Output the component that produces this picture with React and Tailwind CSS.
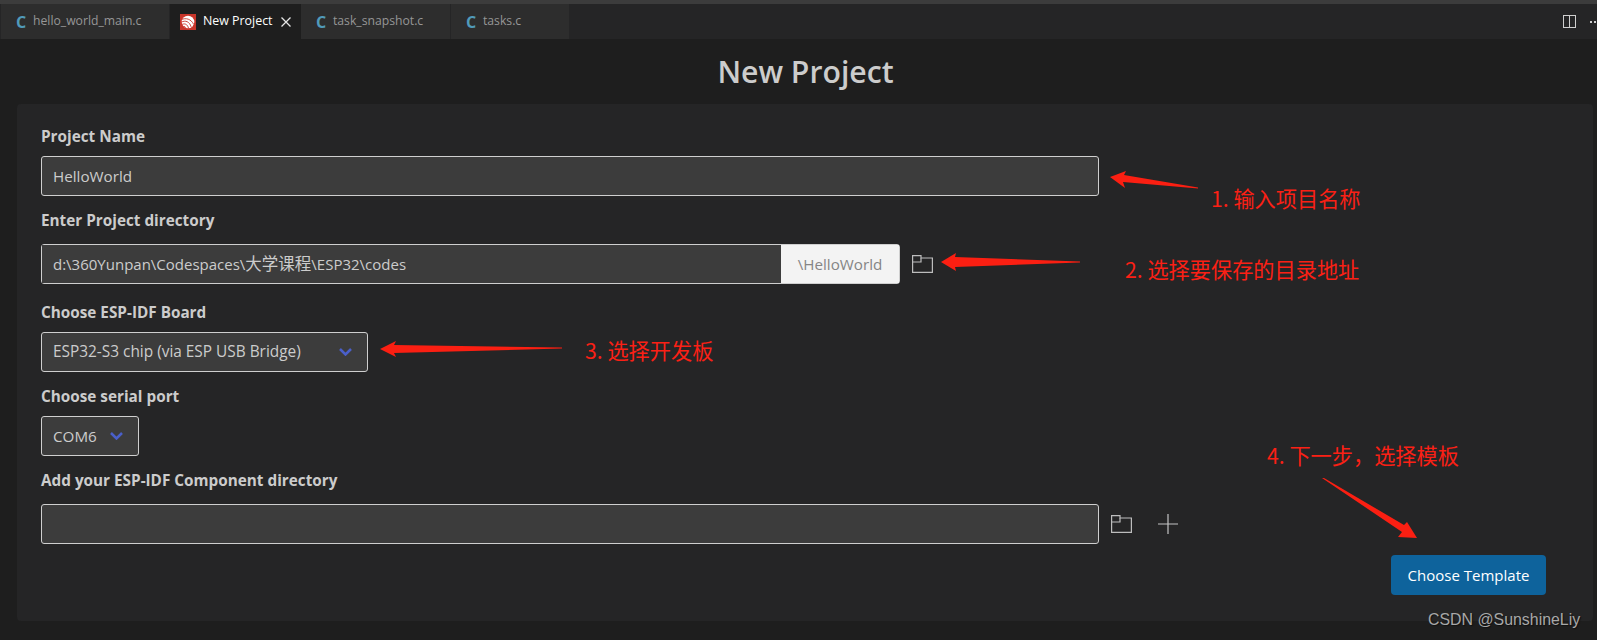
const FONT = "font-['Open_Sans','Noto_Sans_CJK_SC',sans-serif]";

function CIcon() {
  return <span className="w-[12px] text-[16px] font-bold leading-none text-[#519aba]">C</span>;
}

function Tab({ name, width }) {
  return (
    <div className={`flex h-full items-center gap-[5px] border-r border-[#252526] bg-[#2d2d2d] pl-[15px] ${width}`}>
      <CIcon />
      <span className="text-[12.2px] text-[#969696]">{name}</span>
    </div>
  );
}

function EspIcon() {
  return (
    <svg width="16" height="16" viewBox="0 0 16 16" className="shrink-0">
      <rect width="16" height="16" fill="#c8352a" />
      <circle cx="8" cy="8" r="6.3" fill="#fff" />
      <g fill="none" stroke="#c8352a" strokeWidth="0.9" strokeLinecap="round">
        <path d="M1.5 5.5 C6 3.5 11 5 13.5 10" />
        <path d="M1.5 8 C5.5 6 9.5 7.5 11 12.5" />
        <path d="M2 10.5 C4.5 9 7.5 10 8.5 14" />
        <path d="M3.5 12.5 C4.5 12 5.5 12.8 5.8 14" />
      </g>
    </svg>
  );
}

function FolderIcon({ className }) {
  return (
    <svg viewBox="0 0 21 18" fill="none" stroke="#bdbdbd" strokeWidth="1.2" className={className}>
      <path d="M.6 17.4V.6H9V3H20.4V17.4Z" />
      <path d="M.6 7H9V3" />
    </svg>
  );
}

function Chevron() {
  return (
    <svg width="13" height="8" viewBox="0 0 13 8" fill="none" stroke="#4a5fc9" strokeWidth="2.5" className="shrink-0">
      <path d="M1 1L6.5 6.5L12 1" />
    </svg>
  );
}

function Annotation({ className, children }) {
  return (
    <div className={`absolute whitespace-nowrap text-[21.2px] font-normal leading-none text-[#fb2015] font-['Noto_Sans_CJK_SC',sans-serif] ${className}`}>
      {children}
    </div>
  );
}

const labelClass = "h-[22px] text-[15.3px] font-bold leading-[22px] text-[#cccccc]";
const boxClass = "h-[40px] rounded-[3px] border border-[#cfcfcf] bg-[#3c3c3c] text-[15.2px] text-[#cccccc]";

export default function App() {
  return (
    <div className={`relative h-[640px] w-[1597px] overflow-hidden bg-[#1e1e1e] ${FONT}`}>
      <div className="h-[4px] bg-[#3c3c3c]" />

      <div className="flex h-[35px] bg-[#252526] pl-[1px]">
        <Tab name="hello_world_main.c" width="w-[169px]" />
        <div className="flex h-full w-[131px] items-center bg-[#1e1e1e] pl-[10px]">
          <EspIcon />
          <span className="ml-[7px] text-[12.4px] text-white">New Project</span>
          <svg width="10" height="10" viewBox="0 0 10 10" stroke="#e6e6e6" strokeWidth="1.3" className="ml-[8px]">
            <path d="M.5 .5L9.5 9.5M9.5 .5L.5 9.5" />
          </svg>
        </div>
        <Tab name="task_snapshot.c" width="w-[150px]" />
        <Tab name="tasks.c" width="w-[119px]" />
        <div className="ml-auto flex items-center gap-[13px]">
          <svg width="14" height="14" viewBox="0 0 14 14" fill="none" stroke="#cfcfcf" strokeWidth="1">
            <rect x=".5" y=".5" width="12" height="12" />
            <path d="M6.5 .5V12.5" />
          </svg>
          <div className="flex w-[7px] gap-[2px] overflow-hidden">
            <span className="h-[2px] w-[2px] shrink-0 bg-[#cfcfcf]" />
            <span className="h-[2px] w-[2px] shrink-0 bg-[#cfcfcf]" />
            <span className="h-[2px] w-[2px] shrink-0 bg-[#cfcfcf]" />
          </div>
        </div>
      </div>

      <h1 className="flex h-[65px] items-center justify-center pl-[14px] text-[30.2px] font-semibold text-[#cccccc]">
        New Project
      </h1>

      <div className="ml-[17px] h-[517px] w-[1576px] rounded-[4px] bg-[#252526] pl-[24px] pr-[47px] pt-[21px]">
        <div className={`${labelClass} mb-[9px]`}>Project Name</div>
        <div className={`${boxClass} flex w-[1058px] items-center px-[11px]`}>HelloWorld</div>

        <div className={`${labelClass} mb-[13px] mt-[13px]`}>Enter Project directory</div>
        <div className="flex items-center">
          <div className="flex h-[40px] w-[859px] rounded-[3px] border border-[#cfcfcf]">
            <div className="flex flex-1 items-center whitespace-pre bg-[#3c3c3c] px-[11px] text-[15px] text-[#cccccc]">
              d:\360Yunpan\Codespaces\<span className="text-[16.5px]">大学课程</span>\ESP32\codes
            </div>
            <div className="flex w-[118px] items-center justify-center bg-[#f3f3f3] text-[15.2px] text-[#858585]">
              \HelloWorld
            </div>
          </div>
          <FolderIcon className="ml-[12px] h-[18px] w-[21px]" />
        </div>

        <div className={`${labelClass} mb-[9px] mt-[17px]`}>Choose ESP-IDF Board</div>
        <div className={`${boxClass} flex w-[327px] items-center justify-between pl-[11px] pr-[15px]`}>
          <span className="text-[15.4px]">ESP32-S3 chip (via ESP USB Bridge)</span>
          <Chevron />
        </div>

        <div className={`${labelClass} mb-[9px] mt-[13px]`}>Choose serial port</div>
        <div className={`${boxClass} flex w-[98px] items-center justify-between pl-[11px] pr-[15px]`}>
          <span>COM6</span>
          <Chevron />
        </div>

        <div className={`${labelClass} mb-[13px] mt-[13px]`}>Add your ESP-IDF Component directory</div>
        <div className="flex items-center">
          <div className={`${boxClass} w-[1058px]`} />
          <FolderIcon className="ml-[12px] h-[18px] w-[21px]" />
          <svg width="20" height="20" viewBox="0 0 20 20" stroke="#c4c4c4" strokeWidth="1.2" className="ml-[26px]">
            <path d="M10 0V20M0 10H20" />
          </svg>
        </div>

        <div className="mt-[11px] flex justify-end">
          <div className="flex h-[40px] w-[155px] items-center justify-center rounded-[4px] bg-[#0e639c] text-[15px] text-white">
            Choose Template
          </div>
        </div>
      </div>

      <svg width="1597" height="640" className="pointer-events-none absolute left-0 top-0" fill="#fb1f12">
        <polygon points="1110,177 1126,171 1124,175 1198,187.5 1198,188.5 1123,182 1125,188" />
        <polygon points="941,262 956,253 955,257 1080,261.5 1080,262.5 955,267 956,271" />
        <polygon points="380,349 396,341 394,345 562,347.5 562,348.5 394,353 396,357" />
        <polygon points="1322,478 1324,478 1404,525 1407,522 1417,538 1398,537 1402,532" />
      </svg>

      <Annotation className="left-[1211px] top-[187px]">1. 输入项目名称</Annotation>
      <Annotation className="left-[1125px] top-[258px]">2. 选择要保存的目录地址</Annotation>
      <Annotation className="left-[585px] top-[339px]">3. 选择开发板</Annotation>
      <Annotation className="left-[1267px] top-[444px]">4. 下一步，选择模板</Annotation>

      <div className="absolute left-[1428px] top-[610px] text-[15.9px] leading-[20px] text-[#a8a8a8] font-['Liberation_Sans',sans-serif] [text-shadow:1px_1px_1px_#111]">
        CSDN @SunshineLiy
      </div>
    </div>
  );
}
